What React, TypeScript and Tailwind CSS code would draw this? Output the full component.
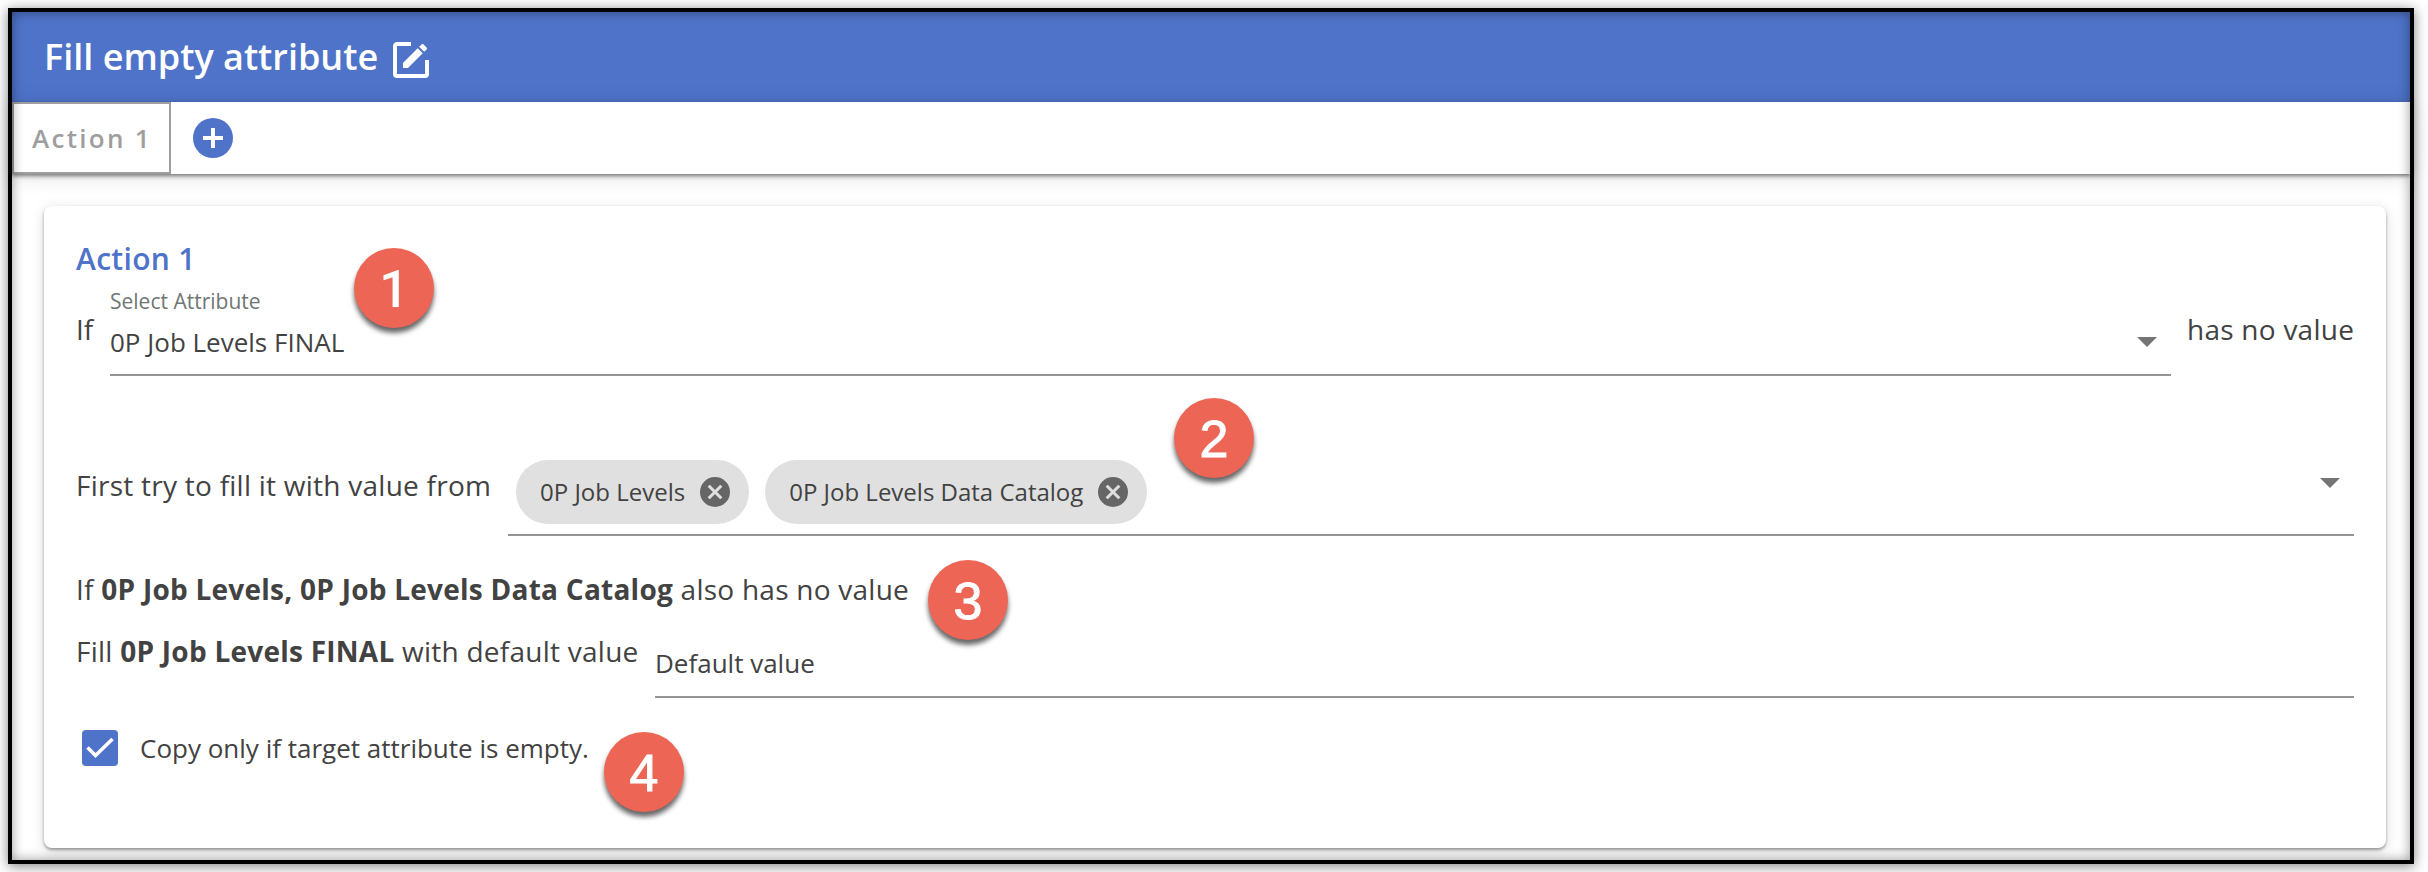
import { useState } from "react";

const DropdownArrow = () => (
  <svg viewBox="0 0 20 10" className="w-5 h-2.5 shrink-0 fill-[#757575]">
    <path d="M0 0h20L10 10z" />
  </svg>
);

const EditIcon = () => (
  <svg viewBox="0 0 24 24" className="w-12 h-12 fill-white">
    <path d="M5,3C3.89,3 3,3.89 3,5V19A2,2 0 0,0 5,21H19A2,2 0 0,0 21,19V12H19V19H5V5H12V3H5M17.78,4C17.61,4 17.43,4.07 17.3,4.2L16.08,5.41L18.58,7.91L19.8,6.7C20.06,6.44 20.06,6 19.8,5.75L18.25,4.2C18.12,4.07 17.95,4 17.78,4M15.37,6.12L8,13.5V16H10.5L17.87,8.62L15.37,6.12Z" />
  </svg>
);

const Chip = ({ label, onRemove }: { label: string; onRemove: () => void }) => (
  <div className="flex h-16 items-center rounded-full bg-[#e0e0e0] pl-6 pr-[19px]">
    <span className="text-[24px] leading-8 whitespace-nowrap">{label}</span>
    <button onClick={onRemove} className="ml-[15px]">
      <svg viewBox="0 0 30 30" className="block w-[30px] h-[30px]">
        <circle cx="15" cy="15" r="15" fill="#666" />
        <path d="M8.7 8.7l12.6 12.6M21.3 8.7L8.7 21.3" stroke="#e0e0e0" strokeWidth="3" />
      </svg>
    </button>
  </div>
);

// numbered callouts that float over the form
const markers = [
  { n: 1, style: "left-[354px] top-[248px] pt-[3px] font-[Roboto,sans-serif] font-medium" },
  { n: 2, style: "left-[1174px] top-[398px] pt-px font-['Liberation_Sans',sans-serif] [-webkit-text-stroke:1px_white]" },
  { n: 3, style: "left-[928px] top-[560px] pt-px font-['Liberation_Sans',sans-serif] [-webkit-text-stroke:1px_white]" },
  { n: 4, style: "left-[604px] top-[732px] pt-px font-['Liberation_Sans',sans-serif] [-webkit-text-stroke:1px_white]" },
];

export default function App() {
  const [sources, setSources] = useState(["0P Job Levels", "0P Job Levels Data Catalog"]);
  const [checked, setChecked] = useState(true);

  return (
    <div className="relative h-[872px] w-[2428px] overflow-hidden bg-white pt-2 pl-2 font-['Open_Sans',sans-serif] text-[#424242]">
      <div className="relative flex h-[856px] w-[2406px] flex-col border-4 border-black bg-white shadow-[0_2px_12px_rgba(0,0,0,0.5)]">
        <header className="flex h-[90px] shrink-0 items-center bg-[#4e73c9] pl-8">
          <h1 className="text-[36px] leading-[44px] font-semibold whitespace-nowrap text-white">Fill empty attribute</h1>
          <button className="mt-1.5 ml-[9px]">
            <EditIcon />
          </button>
        </header>

        <nav className="relative flex h-[72px] shrink-0 items-center bg-white shadow-[0_2px_4px_rgba(0,0,0,0.5),0_2px_20px_rgba(0,0,0,0.12)]">
          <button className="h-[72px] w-[159px] border-2 border-[#9e9e9e] pl-[18px] text-left text-[26px] font-semibold tracking-[2.3px] whitespace-nowrap text-[#9e9e9e]">
            Action 1
          </button>
          <button className="ml-[22px] flex h-10 w-10 items-center justify-center rounded-full bg-[#4e73c9]">
            <svg viewBox="0 0 20 20" className="h-5 w-5 fill-white">
              <path d="M8 0h4v8h8v4h-8v8H8v-8H0V8h8z" />
            </svg>
          </button>
        </nav>

        <main className="mt-8 mr-6 ml-8 h-[642px] rounded-lg bg-white px-8 pt-8 shadow-[0_2px_3px_rgba(0,0,0,0.35),0_3px_14px_rgba(0,0,0,0.14)]">
          <h2 className="h-10 text-[30px] leading-[42px] font-semibold tracking-[0.3px] text-[#4e73c9]">Action 1</h2>

          <div className="flex h-[98px] text-[28px] leading-10">
            <span className="w-[34px] pt-[31px]">If</span>
            <div className="flex flex-1 flex-col border-b-2 border-[#949494]">
              <label className="pt-[9px] text-[21px] leading-7 text-[#6f7673]">Select Attribute</label>
              <div className="flex items-center pt-[7px] pr-[14px]">
                <span className="flex-1 text-[26px] leading-10">0P Job Levels FINAL</span>
                <DropdownArrow />
              </div>
            </div>
            <span className="w-[183px] pt-[31px] pl-4 tracking-[0.25px] whitespace-nowrap">has no value</span>
          </div>

          <div className="mt-[84px] flex h-[76px] text-[28px] leading-10">
            <span className="w-[432px] pt-[5px] tracking-[0.25px] whitespace-nowrap">
              First try to fill it with value from
            </span>
            <div className="flex flex-1 items-start gap-4 border-b-2 border-[#949494] pl-2 pr-[14px]">
              {sources.map((s) => (
                <Chip key={s} label={s} onRemove={() => setSources(sources.filter((x) => x !== s))} />
              ))}
              <div className="ml-auto pt-[18px]">
                <DropdownArrow />
              </div>
            </div>
          </div>

          <p className="mt-[33px] h-10 text-[28px] leading-10 tracking-[0.25px]">
            If <b>{sources.join(", ")}</b> also has no value
          </p>

          <div className="mt-[22px] flex h-[67px] text-[28px] leading-10">
            <span className="w-[579px] tracking-[0.25px] whitespace-nowrap">
              Fill <b>0P Job Levels FINAL</b> with default value
            </span>
            <div className="flex-1 border-b-2 border-[#949494] pt-3 text-[26px]">Default value</div>
          </div>

          <div className="mt-8 flex items-center pl-1.5">
            <button
              onClick={() => setChecked(!checked)}
              className="flex h-9 w-9 items-center justify-center rounded bg-[#4e73c9]"
            >
              {checked && (
                <svg viewBox="0 0 28 22" className="h-[22px] w-7 fill-none stroke-white">
                  <path d="M1.5 10.5l8 8L26.5 2" strokeWidth="3.6" />
                </svg>
              )}
            </button>
            <span className="ml-[22px] text-[26px] leading-9">Copy only if target attribute is empty.</span>
          </div>
        </main>

        <div className="pointer-events-none absolute inset-0 shadow-[inset_0_0_12px_rgba(0,0,0,0.4)]" />
      </div>

      {markers.map(({ n, style }) => (
        <div
          key={n}
          className={`absolute flex h-20 w-20 items-center justify-center rounded-full bg-[#ed6555] text-[52px] leading-none text-white shadow-[0_5px_5px_rgba(0,0,0,0.6)] ${style}`}
        >
          {n}
        </div>
      ))}
    </div>
  );
}
